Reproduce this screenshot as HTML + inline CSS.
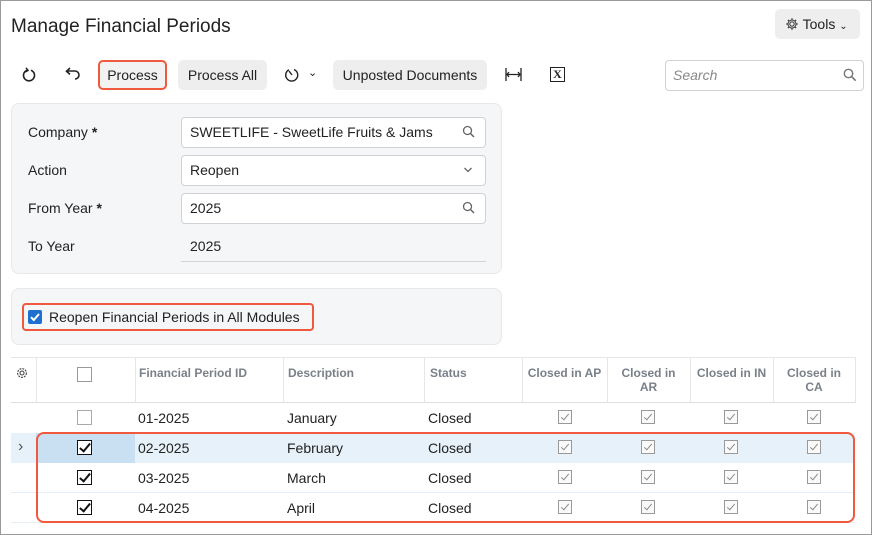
<!DOCTYPE html>
<html><head><style>
*{box-sizing:border-box;margin:0;padding:0}
body{width:872px;height:535px;background:#fff;font-family:"Liberation Sans",sans-serif;color:#222;position:relative;overflow:hidden}
.a{position:absolute}
.btn{position:absolute;top:60px;height:30px;background:#eeeeee;border-radius:5px;font-size:14px;line-height:30px;text-align:center;color:#222}
.panel{position:absolute;left:11px;width:491px;background:#f4f6f8;border:1px solid #e6e8ea;border-radius:8px}
.lbl{position:absolute;left:28px;font-size:14px}
.inp{position:absolute;left:181px;width:305px;height:31px;background:#fff;border:1px solid #cfd3d7;border-radius:4px;font-size:14px;line-height:29px;padding-left:8px}
.hd{position:absolute;top:366px;font-size:12px;font-weight:bold;color:#7a8089;line-height:14px}
.cell{position:absolute;font-size:14px}
.cb{position:absolute;width:15px;height:15px;border:1px solid #888;background:#fff}
.gcb{position:absolute;width:14px;height:14px;border:1px solid #999;background:#fafafa}
.gcb:after{content:"";position:absolute;left:4px;top:1px;width:3px;height:7px;border:solid #8a8a8a;border-width:0 1.3px 1.3px 0;transform:rotate(40deg)}
.bcb{position:absolute;width:15px;height:15px;border:1.5px solid #111;background:#fff}
.bcb:after{content:"";position:absolute;left:4px;top:0px;width:4px;height:9px;border:solid #111;border-width:0 2px 2px 0;transform:rotate(40deg)}
.vl{position:absolute;top:357px;width:1px;height:46px;background:#e4e6e8}
</style></head><body>
<div class="a" style="left:0;top:0;width:872px;height:535px;border:1px solid #9a9a9a;z-index:10;pointer-events:none"></div>
<div class="a" style="left:11px;top:16px;font-size:19px;color:#222">Manage Financial Periods</div>
<div class="a" style="left:775px;top:9px;width:85px;height:30px;background:#eeeeee;border-radius:5px;font-size:14px;line-height:30px;padding-left:10px">
<svg width="14" height="14" viewBox="0 0 16 16" style="vertical-align:-2px"><circle cx="8" cy="8" r="2.5" fill="none" stroke="#444" stroke-width="1.3"/><path d="M8 1.5v2M8 12.5v2M1.5 8h2M12.5 8h2M3.4 3.4l1.4 1.4M11.2 11.2l1.4 1.4M3.4 12.6l1.4-1.4M11.2 4.8l1.4-1.4" stroke="#444" stroke-width="1.6"/><circle cx="8" cy="8" r="4.6" fill="none" stroke="#444" stroke-width="1.2"/></svg> Tools <span style="font-size:10px">&#8964;</span></div>

<svg class="a" style="left:21px;top:67px" width="16" height="16" viewBox="0 0 16 16"><path d="M10 3.2A5.5 5.5 0 1 1 6 3.2" fill="none" stroke="#222" stroke-width="1.6"/><path d="M5 0.8L7 3.4 4.3 5" fill="none" stroke="#222" stroke-width="1.5"/></svg>
<svg class="a" style="left:64px;top:67px" width="17" height="14" viewBox="0 0 17 14"><path d="M3 6h8a4 4 0 0 1 0 8" fill="none" stroke="#222" stroke-width="1.6" transform="translate(0,-2)"/><path d="M6 1L2.5 4.2 6 7.4" fill="none" stroke="#222" stroke-width="1.6"/></svg>
<div class="btn" style="left:98px;width:69px;background:#f2f2f2;border:2px solid #f0593e;line-height:26px">Process</div>
<div class="btn" style="left:178px;width:89px">Process All</div>
<svg class="a" style="left:284px;top:67px" width="16" height="16" viewBox="0 0 16 16"><path d="M10 2.5A6 6 0 1 1 5 2.7" fill="none" stroke="#222" stroke-width="1.4"/><path d="M5 4l3 4" stroke="#222" stroke-width="1.4"/></svg>
<div class="a" style="left:308px;top:66px;font-size:11px">&#8964;</div>
<div class="btn" style="left:333px;width:154px">Unposted Documents</div>
<svg class="a" style="left:505px;top:67px" width="17" height="15" viewBox="0 0 17 15"><path d="M1 1v13M16 1v13M2 7.5h13M4 5l-2 2.5 2 2.5M13 5l2 2.5-2 2.5" fill="none" stroke="#222" stroke-width="1.3"/></svg>
<div class="a" style="left:550px;top:67px;width:15px;height:15px;border:1.5px solid #222;font-size:12px;font-weight:bold;line-height:12px;text-align:center;font-family:'Liberation Serif',serif">X</div>
<div class="a" style="left:665px;top:60px;width:199px;height:31px;border:1px solid #cfd3d7;border-radius:4px;font-size:14px;font-style:italic;color:#888;line-height:29px;padding-left:7px">Search</div>
<svg class="a" style="left:843px;top:68px" width="14" height="14" viewBox="0 0 14 14"><circle cx="5.5" cy="5.5" r="4.2" fill="none" stroke="#777" stroke-width="1.4"/><path d="M8.7 8.7l4 4" stroke="#777" stroke-width="1.6"/></svg>

<div class="panel" style="top:103px;height:171px"></div>
<div class="lbl" style="top:124px">Company <b>*</b></div>
<div class="inp" style="top:117px">SWEETLIFE - SweetLife Fruits &amp; Jams</div>
<div class="lbl" style="top:162px">Action</div>
<div class="inp" style="top:155px">Reopen</div>
<div class="lbl" style="top:200px">From Year <b>*</b></div>
<div class="inp" style="top:193px">2025</div>
<div class="lbl" style="top:238px">To Year</div>
<div class="a" style="left:190px;top:238px;font-size:14px">2025</div>
<div class="a" style="left:181px;top:261px;width:305px;height:1px;background:#d3d6d9"></div>
<svg class="a" style="left:462px;top:125px" width="14" height="14" viewBox="0 0 14 14"><circle cx="5.5" cy="5.5" r="4" fill="none" stroke="#666" stroke-width="1.3"/><path d="M8.5 8.5l3.5 3.5" stroke="#666" stroke-width="1.5"/></svg>
<svg class="a" style="left:462px;top:201px" width="14" height="14" viewBox="0 0 14 14"><circle cx="5.5" cy="5.5" r="4" fill="none" stroke="#666" stroke-width="1.3"/><path d="M8.5 8.5l3.5 3.5" stroke="#666" stroke-width="1.5"/></svg>
<svg class="a" style="left:463px;top:166px" width="10" height="8" viewBox="0 0 10 8"><path d="M1.5 2l3.5 3.5L8.5 2" fill="none" stroke="#666" stroke-width="1.3"/></svg>

<div class="panel" style="top:288px;height:57px"></div>
<div class="a" style="left:22px;top:303px;width:292px;height:28px;border:2px solid #f0593e;border-radius:4px"></div>
<div class="a" style="left:28px;top:310px;width:14px;height:14px;background:#1f6fd1;border-radius:2px"><svg width="14" height="14" viewBox="0 0 14 14"><path d="M3 7.2l2.8 2.8L11 4" fill="none" stroke="#fff" stroke-width="2"/></svg></div>
<div class="a" style="left:49px;top:309px;font-size:14px">Reopen Financial Periods in All Modules</div>

<div class="a" style="left:11px;top:357px;width:844px;height:1px;background:#e4e6e8"></div>
<div class="a" style="left:11px;top:402px;width:844px;height:1px;background:#dde0e3"></div>
<div class="vl" style="left:36px"></div><div class="vl" style="left:135px"></div><div class="vl" style="left:283px"></div><div class="vl" style="left:424px"></div><div class="vl" style="left:522px"></div><div class="vl" style="left:607px"></div><div class="vl" style="left:690px"></div><div class="vl" style="left:773px"></div><div class="vl" style="left:855px"></div>
<svg class="a" style="left:15px;top:366px" width="14" height="14" viewBox="0 0 16 16"><circle cx="8" cy="8" r="2.3" fill="none" stroke="#444" stroke-width="1.2"/><circle cx="8" cy="8" r="5" fill="none" stroke="#444" stroke-width="1.3" stroke-dasharray="2.2 1.2"/></svg>
<div class="cb" style="left:77px;top:367px;border-color:#999"></div>
<div class="hd" style="left:139px">Financial Period ID</div>
<div class="hd" style="left:288px">Description</div>
<div class="hd" style="left:430px">Status</div>
<div class="hd" style="left:522px;width:85px;text-align:center">Closed in AP</div>
<div class="hd" style="left:607px;width:83px;text-align:center">Closed in<br>AR</div>
<div class="hd" style="left:690px;width:83px;text-align:center">Closed in IN</div>
<div class="hd" style="left:773px;width:82px;text-align:center">Closed in<br>CA</div>

<div class="a" style="left:11px;top:433px;width:844px;height:30px;background:#e6f1f9"></div>
<div class="a" style="left:36px;top:433px;width:99px;height:30px;background:#c9e0f2"></div>
<div class="a" style="left:11px;top:492px;width:844px;height:1px;background:#e6eef4"></div>
<div class="a" style="left:11px;top:522px;width:844px;height:1px;background:#e6eef4"></div>
<div class="a" style="left:18px;top:438px;font-size:16px;color:#555">&#8250;</div>

<div class="cb" style="left:77px;top:410px;border-color:#aaa"></div>
<div class="bcb" style="left:77px;top:440px"></div>
<div class="bcb" style="left:77px;top:470px"></div>
<div class="bcb" style="left:77px;top:500px"></div>

<div class="cell" style="left:138px;top:410px">01-2025</div><div class="cell" style="left:287px;top:410px">January</div><div class="cell" style="left:428px;top:410px">Closed</div>
<div class="cell" style="left:138px;top:440px">02-2025</div><div class="cell" style="left:287px;top:440px">February</div><div class="cell" style="left:428px;top:440px">Closed</div>
<div class="cell" style="left:138px;top:470px">03-2025</div><div class="cell" style="left:287px;top:470px">March</div><div class="cell" style="left:428px;top:470px">Closed</div>
<div class="cell" style="left:138px;top:500px">04-2025</div><div class="cell" style="left:287px;top:500px">April</div><div class="cell" style="left:428px;top:500px">Closed</div>

<div class="gcb" style="left:558px;top:410px"></div><div class="gcb" style="left:641px;top:410px"></div><div class="gcb" style="left:724px;top:410px"></div><div class="gcb" style="left:807px;top:410px"></div>
<div class="gcb" style="left:558px;top:440px"></div><div class="gcb" style="left:641px;top:440px"></div><div class="gcb" style="left:724px;top:440px"></div><div class="gcb" style="left:807px;top:440px"></div>
<div class="gcb" style="left:558px;top:470px"></div><div class="gcb" style="left:641px;top:470px"></div><div class="gcb" style="left:724px;top:470px"></div><div class="gcb" style="left:807px;top:470px"></div>
<div class="gcb" style="left:558px;top:500px"></div><div class="gcb" style="left:641px;top:500px"></div><div class="gcb" style="left:724px;top:500px"></div><div class="gcb" style="left:807px;top:500px"></div>

<div class="a" style="left:36px;top:432px;width:819px;height:91px;border:2px solid #f0593e;border-radius:8px"></div>
</body></html>
